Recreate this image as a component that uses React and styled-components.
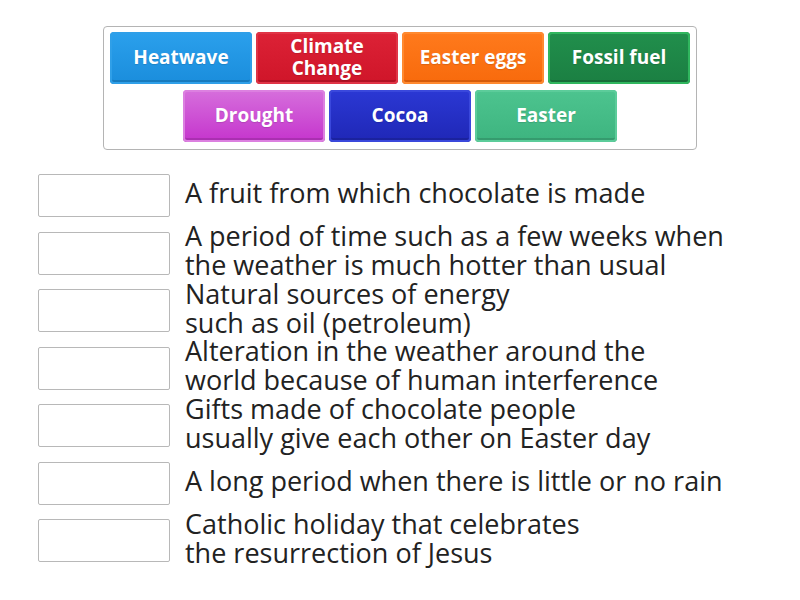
import React from 'react';
import styled, { createGlobalStyle } from 'styled-components';

const GlobalStyle = createGlobalStyle`
	body {
		margin: 0;
		background: #fff;
		font-family: 'Open Sans', 'Noto Sans', sans-serif;
	}
`;

const tiles = [
	[
		{ id: 1, text: 'Heatwave', top: '#2ba0ec', bottom: '#1a8ddc', edge: '#2f9fe8' },
		{ id: 2, text: 'Climate Change', top: '#dc2236', bottom: '#cf1529', edge: '#e03446' },
		{ id: 3, text: 'Easter eggs', top: '#ff7a1c', bottom: '#f86a0c', edge: '#ff8a30' },
		{ id: 4, text: 'Fossil fuel', top: '#218f4c', bottom: '#1b7f42', edge: '#30b65e' },
	],
	[
		{ id: 5, text: 'Drought', top: '#d66fdc', bottom: '#c534cd', edge: '#dc80e0' },
		{ id: 6, text: 'Cocoa', top: '#2b38d4', bottom: '#1f27b6', edge: '#3a48dc' },
		{ id: 7, text: 'Easter', top: '#4dc48f', bottom: '#3db47f', edge: '#5ccc9a' },
	],
];

const definitions = [
	['A fruit from which chocolate is made'],
	['A period of time such as a few weeks when', 'the weather is much hotter than usual'],
	['Natural sources of energy', 'such as oil (petroleum)'],
	['Alteration in the weather around the', 'world because of human interference'],
	['Gifts made of chocolate people', 'usually give each other on Easter day'],
	['A long period when there is little or no rain'],
	['Catholic holiday that celebrates', 'the resurrection of Jesus'],
];

const Page = styled.div`
	padding-top: 26px;
`;

const Bank = styled.div`
	width: 592px;
	margin: 0 auto;
	border: 1px solid #b4b4b4;
	border-radius: 4px;
	padding: 5px 0 7px;
	display: flex;
	flex-direction: column;
	align-items: center;
	gap: 6px;
`;

const TileRow = styled.div`
	display: flex;
	gap: 4px;
`;

const Tile = styled.div`
	width: 142px;
	height: 52px;
	box-sizing: border-box;
	border-radius: 4px;
	display: flex;
	align-items: center;
	justify-content: center;
	text-align: center;
	color: #fff;
	font-weight: 700;
	font-size: 19px;
	line-height: 22px;
	padding: 0 8px 3px;
	background: linear-gradient(${(p) => p.top}, ${(p) => p.bottom});
	box-shadow:
		inset 0 0 0 2px ${(p) => p.edge},
		inset 0 -4px 0 rgba(0, 0, 0, 0.14);
	text-shadow: 0 1px 1px rgba(0, 0, 0, 0.12);
`;

const List = styled.div`
	padding: 17px 0 0 38px;
`;

const Row = styled.div`
	height: 57.5px;
	display: flex;
	align-items: center;
	gap: 15px;
`;

const Slot = styled.div`
	width: 132px;
	height: 43px;
	flex-shrink: 0;
	box-sizing: border-box;
	border: 1px solid #b8b8b8;
	border-radius: 2px;
`;

const Definition = styled.div`
	font-size: 27px;
	line-height: 29px;
	color: #222;
	white-space: nowrap;
	margin-top: -6px;
`;

const App = () => (
	<Page>
		<GlobalStyle />
		<Bank>
			{tiles.map((row, i) => (
				<TileRow key={i}>
					{row.map((t) => (
						<Tile key={t.id} top={t.top} bottom={t.bottom} edge={t.edge}>
							{t.text}
						</Tile>
					))}
				</TileRow>
			))}
		</Bank>
		<List>
			{definitions.map((lines, i) => (
				<Row key={i}>
					<Slot />
					<Definition>
						{lines.map((l) => (
							<div key={l}>{l}</div>
						))}
					</Definition>
				</Row>
			))}
		</List>
	</Page>
);

export default App;
